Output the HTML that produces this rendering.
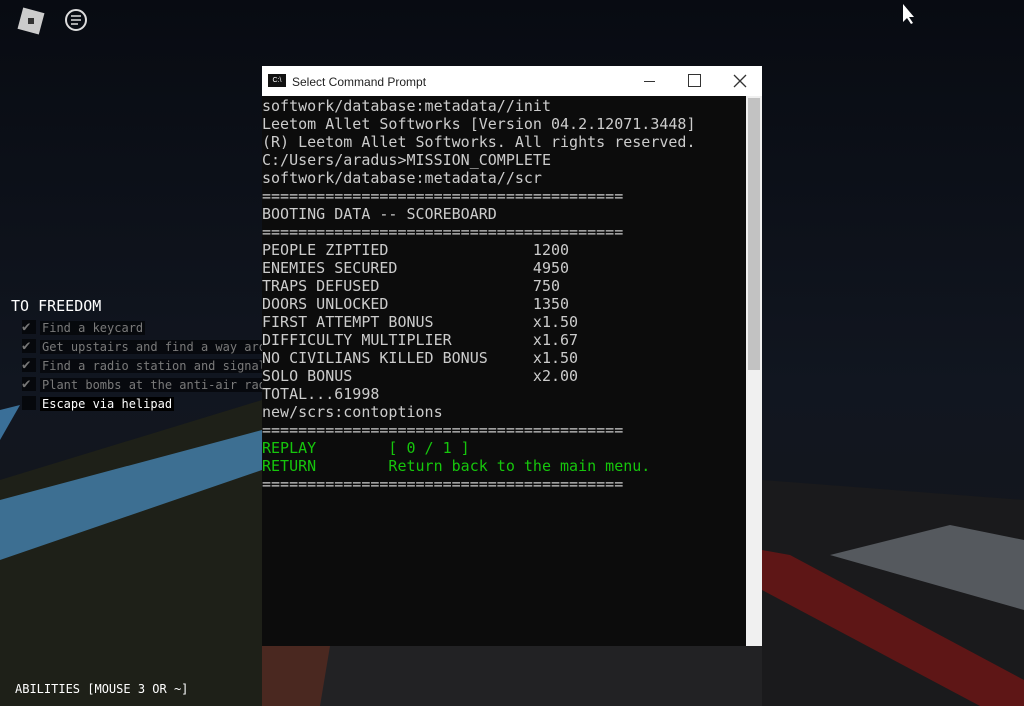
<!DOCTYPE html>
<html><head><style>
body{margin:0;width:1024px;height:706px;overflow:hidden;background:#0d1018;position:relative;font-family:"DejaVu Sans Mono","Liberation Mono",monospace}
.bg{position:absolute;left:0;top:0}
.win{position:absolute;left:262px;top:66px;width:500px;height:580px;background:#fff;}
.title{position:absolute;left:0;top:0;width:500px;height:30px;background:#fff;font-family:"Liberation Sans",sans-serif;font-size:12px;color:#222}
.con{position:absolute;left:0;top:30px;width:484px;height:550px;background:#0c0c0c;}
.sb{position:absolute;left:484px;top:30px;width:16px;height:550px;background:#f0f0f0}
.thumb{position:absolute;left:486px;top:32px;width:12px;height:272px;background:#c2c2c2}
pre{margin:0;position:absolute;left:0;top:1px;font-family:"DejaVu Sans Mono",monospace;font-size:15px;line-height:18px;color:#cccccc;letter-spacing:0}
.g{color:#16c60c}
.hud{position:absolute;color:#fff;font-size:15px}
.obj{position:absolute;left:22px;font-size:12px;height:16px;line-height:16px;}
.obj .b{display:inline-block;width:14px;height:14px;background:rgba(0,0,0,.6);vertical-align:top;margin-right:4px;color:#777;font-size:14px;line-height:14px}
.obj span.t{background:rgba(0,0,0,.55);color:#7a7a7a;padding:0 2px}
</style></head><body>
<svg class="bg" width="1024" height="706">
<defs><linearGradient id="sky" x1="0" y1="0" x2="0" y2="1"><stop offset="0" stop-color="#080b12"/><stop offset=".55" stop-color="#111620"/><stop offset="1" stop-color="#161719"/></linearGradient></defs>
<rect width="1024" height="706" fill="url(#sky)"/>
<polygon points="0,480 262,400 262,706 0,706" fill="#1e2018"/>
<polygon points="0,500 262,430 262,470 0,560" fill="#3d6f92"/>
<polygon points="0,410 20,405 0,440" fill="#3a6f98"/>
<polygon points="762,480 1024,500 1024,706 762,706" fill="#1a1a1c"/>
<polygon points="762,550 790,555 1024,680 1024,706 980,706 762,590" fill="#5e1616"/>
<polygon points="830,555 950,525 1024,540 1024,610" fill="#55595e"/>
<rect x="262" y="646" width="500" height="60" fill="#222224"/>
<polygon points="262,646 330,646 320,706 262,706" fill="#4a2820"/>
<rect x="20" y="10" width="22" height="22" transform="rotate(15 31 21)" fill="#ccc"/>
<rect x="28" y="18" width="6" height="6" fill="#333"/>
<circle cx="76" cy="20" r="10" fill="none" stroke="#ddd" stroke-width="2"/>
<path d="M71 16h10M71 20h10M71 24h7" stroke="#ddd" stroke-width="1.5"/>
<path d="M903 4 L903 22 L907 18 L911 24 L913 23 L909 17 L914 17 Z" fill="#fff"/>
</svg>
<div class="hud" style="left:11px;top:297px">TO FREEDOM</div>
<div class="obj" style="top:320px"><span class="b">✔</span><span class="t">Find a keycard</span></div>
<div class="obj" style="top:339px"><span class="b">✔</span><span class="t">Get upstairs and find a way arou</span></div>
<div class="obj" style="top:358px"><span class="b">✔</span><span class="t">Find a radio station and signal</span></div>
<div class="obj" style="top:377px"><span class="b">✔</span><span class="t">Plant bombs at the anti-air rada</span></div>
<div class="obj" style="top:396px"><span class="b"></span><span class="t" style="color:#fff;background:#000">Escape via helipad</span></div>
<div class="hud" style="left:15px;top:682px;font-size:12px">ABILITIES [MOUSE 3 OR ~]</div>
<div class="win">
<div class="title">
<div style="position:absolute;left:6px;top:8px;width:18px;height:13px;background:#111;color:#fff;font-size:7px;line-height:13px;text-align:center">C:\</div>
<div style="position:absolute;left:30px;top:9px">Select Command Prompt</div>
<div style="position:absolute;left:382px;top:15px;width:11px;height:1px;background:#333"></div>
<div style="position:absolute;left:426px;top:8px;width:11px;height:11px;border:1px solid #333"></div>
<svg style="position:absolute;left:471px;top:8px" width="14" height="14"><path d="M1 1L13 13M13 1L1 13" stroke="#333" stroke-width="1.3"/></svg>
</div>
<div class="con"><pre>softwork/database:metadata//init
Leetom Allet Softworks [Version 04.2.12071.3448]
(R) Leetom Allet Softworks. All rights reserved.
C:/Users/aradus>MISSION_COMPLETE
softwork/database:metadata//scr
========================================
BOOTING DATA -- SCOREBOARD
========================================
PEOPLE ZIPTIED                1200
ENEMIES SECURED               4950
TRAPS DEFUSED                 750
DOORS UNLOCKED                1350
FIRST ATTEMPT BONUS           x1.50
DIFFICULTY MULTIPLIER         x1.67
NO CIVILIANS KILLED BONUS     x1.50
SOLO BONUS                    x2.00
TOTAL...61998
new/scrs:contoptions
========================================
<span class="g">REPLAY        [ 0 / 1 ]
RETURN        Return back to the main menu.</span>
========================================</pre></div>
<div class="sb"></div><div class="thumb"></div>
</div>
</body></html>
